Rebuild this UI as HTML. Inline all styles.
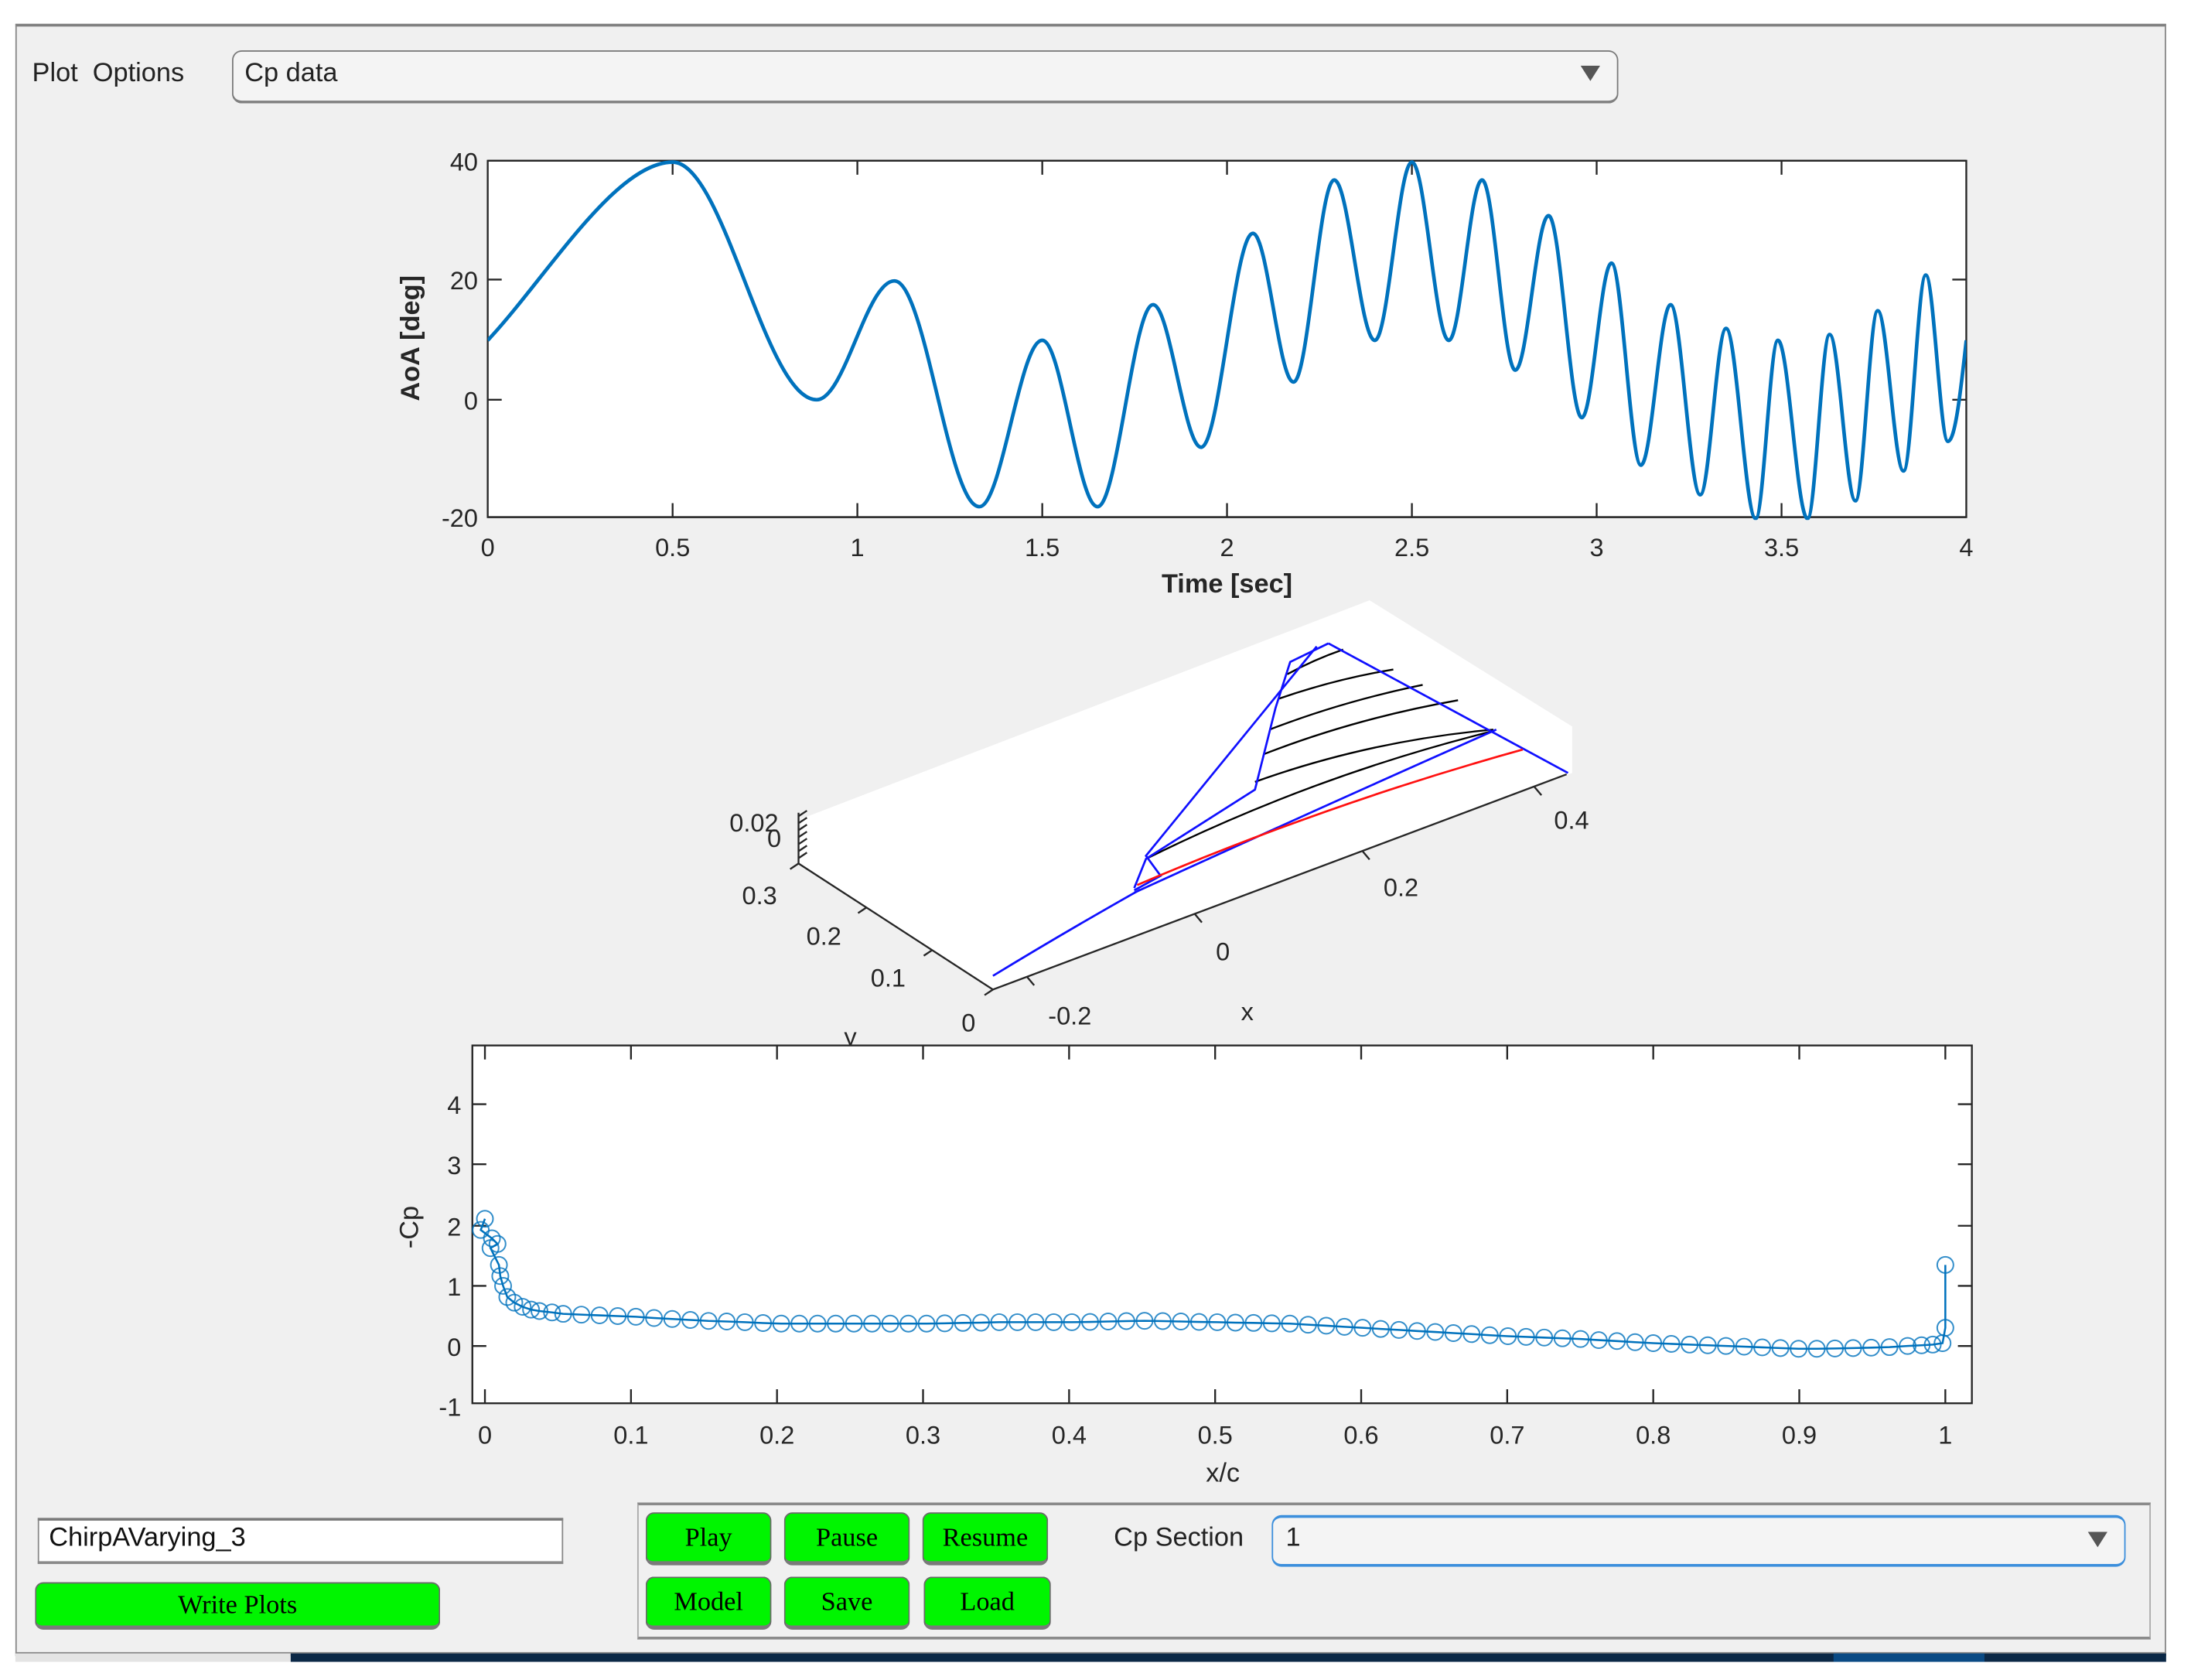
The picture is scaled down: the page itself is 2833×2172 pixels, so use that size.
<!DOCTYPE html>
<html><head><meta charset="utf-8"><style>
html,body{margin:0;padding:0;background:#fff;width:2833px;height:2171px;overflow:hidden}
#w{position:absolute;left:0;top:0;width:1568px;height:1202px;transform:scale(1.807);transform-origin:0 0;font-family:"Liberation Sans",sans-serif;color:#222}
.a{position:absolute}
.btn{position:absolute;background:#00f500;border-radius:6px;border:1px solid #6a6a6a;border-bottom:3px solid #7a7a7a;box-sizing:border-box;font-family:"Liberation Serif",serif;font-size:19px;text-align:center;color:#000}
</style></head><body><div id="w">
<div class="a" style="left:11px;top:17px;width:1537px;height:1163px;background:#f0f0f0;border:1px solid #888;border-top:2px solid #808080;border-bottom:3px solid #8a8a8a"></div>
<div class="a" style="left:11px;top:1183px;width:197px;height:6px;background:#e4e4e4"></div>
<div class="a" style="left:208px;top:1183px;width:1342px;height:6px;background:#0b2846"></div>
<div class="a" style="left:1312px;top:1183px;width:108px;height:6px;background:#0a4a84"></div>

<div class="a" style="left:23px;top:42px;font-size:19px">Plot&nbsp; Options</div>
<div class="a" style="left:166px;top:36px;width:990px;height:35px;background:#f4f4f4;border:1px solid #7a7a7a;border-bottom:2px solid #808080;border-radius:7px"></div>
<div class="a" style="left:175px;top:42px;font-size:19px">Cp data</div>
<svg class="a" style="left:1131px;top:47px" width="14" height="12"><path d="M0,0H14L7,11Z" fill="#555"/></svg>

<svg class="a" style="left:0;top:0" width="1560" height="1196" font-family="Liberation Sans, sans-serif" font-size="18" fill="#262626">
<defs>
<clipPath id="c1"><rect x="349" y="113" width="1058" height="259"/></clipPath>
<marker id="m" markerWidth="14" markerHeight="14" refX="7" refY="7" markerUnits="userSpaceOnUse"><circle cx="7" cy="7" r="5.8" fill="none" stroke="#0072BD" stroke-width="1.1" stroke-opacity="0.8"/></marker>
</defs>
<rect x="349" y="115" width="1058" height="255" fill="#fff" stroke="#262626" stroke-width="1.3"/>
<g stroke="#262626" stroke-width="1.3">
<path d="M349,115h1058M349,370h1058"/>
<path d="M481.3,115v10M613.5,115v10M745.8,115v10M878,115v10M1010.3,115v10M1142.5,115v10M1274.8,115v10M481.3,370v-10M613.5,370v-10M745.8,370v-10M878,370v-10M1010.3,370v-10M1142.5,370v-10M1274.8,370v-10M349,200h10M349,286h10M1407,200h-10M1407,286h-10"/>
</g>
<g text-anchor="end">
<text x="342" y="122">40</text><text x="342" y="207">20</text><text x="342" y="293">0</text><text x="342" y="377">-20</text></g>
<g text-anchor="middle">
<text x="349" y="398">0</text><text x="481.3" y="398">0.5</text><text x="613.5" y="398">1</text><text x="745.8" y="398">1.5</text><text x="878" y="398">2</text><text x="1010.3" y="398">2.5</text><text x="1142.5" y="398">3</text><text x="1274.8" y="398">3.5</text><text x="1407" y="398">4</text>
<text x="878" y="424" font-weight="bold" font-size="19">Time [sec]</text>
<text transform="translate(300,242) rotate(-90)" font-weight="bold" font-size="19">AoA [deg]</text>
</g>
<path clip-path="url(#c1)" fill="none" stroke="#0072BD" stroke-width="2.6" d="M349,243.5 C390,200 440,116 481.3,116 C518.3,116 547.4,286 584.4,286 C604.4,286 620,201 640,201 C662,201 678.8,362.5 700.8,362.5 C716.8,362.5 729.8,243.5 745.8,243.5 C759.8,243.5 771.4,362.5 785.4,362.5 C799.4,362.5 811.1,218 825.1,218 C837.1,218 847.5,320 859.5,320 C872.5,320 883.5,167 896.5,167 C907,167 915.1,273.3 925.6,273.3 C936.1,273.3 944.2,128.8 954.7,128.8 C965.2,128.8 973.3,243.5 983.8,243.5 C993.3,243.5 1000.8,116 1010.3,116 C1019.8,116 1027.2,243.5 1036.7,243.5 C1045.3,243.5 1051.9,128.8 1060.5,128.8 C1069.1,128.8 1075.7,264.8 1084.3,264.8 C1092.9,264.8 1099.5,154.3 1108.1,154.3 C1116.7,154.3 1123.3,298.8 1131.9,298.8 C1139.5,298.8 1145.5,188.3 1153.1,188.3 C1160.7,188.3 1166.6,332.8 1174.2,332.8 C1181.8,332.8 1187.8,218 1195.4,218 C1203,218 1209,354 1216.6,354 C1223.3,354 1228.4,235 1235.1,235 C1242.7,235 1248.7,371 1256.3,371 C1262,371 1266.5,243.5 1272.2,243.5 C1279.8,243.5 1285.8,371 1293.4,371 C1299.1,371 1303.5,239.3 1309.2,239.3 C1315.9,239.3 1321,358.3 1327.7,358.3 C1333.4,358.3 1337.9,222.3 1343.6,222.3 C1350.3,222.3 1355.4,337 1362.1,337 C1367.8,337 1372.3,196.8 1378,196.8 C1383.7,196.8 1388.2,315.8 1393.9,315.8 C1399,315.8 1403,280 1407,243.5"/>

<polygon points="573.5,585.8 980,429.5 1125,519.8 1125,553 710.5,708 571.4,617.8" fill="#fff"/>
<g stroke="#262626" stroke-width="1.3" fill="none">
<path d="M571.4,617.8L710.5,708L1121,554"/>
<path d="M571.4,617.8V581.5"/>
<path d="M571.4,584l6,-4M571.4,589l6,-4M571.4,594l6,-4M571.4,599l6,-4M571.4,604l6,-4M571.4,609l6,-4M571.4,614l6,-4"/>
<path d="M571.4,617.8l-6,4M620,649.3l-6,4M667,679.8l-6,4M710.5,708l-6,4"/>
<path d="M735,699l5,6M855,654l5,6M975,609l5,6M1098,563l5,6"/>
</g>
<g stroke="#000" stroke-width="1.3" fill="none">
<path d="M921.1,482.4Q940,472 961.1,464.7"/>
<path d="M914.8,500Q955,486 997,479"/>
<path d="M908.5,522Q960,502 1018,490"/>
<path d="M904.3,539.6Q970,514 1043.3,501"/>
<path d="M898,559.4Q980,530 1068.6,522"/>
<path d="M820,614.5Q940,555 1068.6,523"/>
</g>
<g stroke="#1010ff" stroke-width="1.5" fill="none">
<path d="M950.6,460.3L1122,553"/>
<path d="M950.6,460.3L923.2,473.6L912.7,506.6L898,565L820,614.5L811.6,635.4"/>
<path d="M942.2,462.5L820,612.3L830.5,626.6L811.6,637"/>
<path d="M811.6,638.7Q940,580 1070.7,522"/>
<path d="M710.5,698.2Q760,668 815.8,636.5"/>
</g>
<path d="M813.7,633.2Q950,575 1089.6,536.3" stroke="#ff1010" stroke-width="1.5" fill="none"/>
<text x="522" y="595">0.02</text><text x="549" y="606">0</text>
<text x="531" y="647">0.3</text><text x="577" y="676">0.2</text><text x="623" y="706">0.1</text><text x="688" y="738">0</text>
<text x="604" y="748">y</text>
<text x="750" y="733">-0.2</text><text x="870" y="687">0</text><text x="990" y="641">0.2</text><text x="1112" y="593">0.4</text>
<text x="888" y="730">x</text>

<rect x="338" y="748" width="1073" height="256" fill="#fff" stroke="#262626" stroke-width="1.3"/>
<g stroke="#262626" stroke-width="1.3">
<path d="M338,790h10M338,833h10M338,877h10M338,920h10M338,963h10M1411,790h-10M1411,833h-10M1411,877h-10M1411,920h-10M1411,963h-10"/>
<path d="M451.5,1004v-10M556,1004v-10M660.5,1004v-10M765,1004v-10M869.5,1004v-10M974,1004v-10M1078.5,1004v-10M1183,1004v-10M1287.5,1004v-10M451.5,748v10M556,748v10M660.5,748v10M765,748v10M869.5,748v10M974,748v10M1078.5,748v10M1183,748v10M1287.5,748v10M347,748v10M1392,748v10M347,1004v-10M1392,1004v-10"/>
</g>
<g text-anchor="end">
<text x="330" y="797">4</text><text x="330" y="840">3</text><text x="330" y="884">2</text><text x="330" y="927">1</text><text x="330" y="970">0</text><text x="330" y="1013">-1</text></g>
<g text-anchor="middle">
<text x="347" y="1033">0</text><text x="451.5" y="1033">0.1</text><text x="556" y="1033">0.2</text><text x="660.5" y="1033">0.3</text><text x="765" y="1033">0.4</text><text x="869.5" y="1033">0.5</text><text x="974" y="1033">0.6</text><text x="1078.5" y="1033">0.7</text><text x="1183" y="1033">0.8</text><text x="1287.5" y="1033">0.9</text><text x="1392" y="1033">1</text>
<text x="875" y="1060" font-size="19">x/c</text>
<text transform="translate(299,878) rotate(-90)" font-size="19">-Cp</text>
</g>
<polyline fill="none" stroke="#0072BD" stroke-width="1.4" marker-start="url(#m)" marker-mid="url(#m)" marker-end="url(#m)" points="347,872 344,880 352,886 356,890 351,893 357,905 358,913 360,920 363,928 368,932 374,935 380,937 386,938 395,939 403,940 416,940.6 429,941.1 442,941.6 455,942.1 468,943 481,943.7 494,944.4 507,945.1 520,945.5 533,946 546,946.6 559,947 572,947 585,947 598,947 611,947 624,947 637,947 650,947 663,947 676,946.8 689,946.5 702,946.3 715,946 728,946 741,946 754,946 767,946 780,945.8 793,945.5 806,945.2 819,945 832,945.2 845,945.5 858,945.8 871,946 884,946.3 897,946.5 910,946.8 923,947 936,947.8 949,948.5 962,949.3 975,950 988,950.8 1001,951.5 1014,952.3 1027,953 1040,953.8 1053,954.5 1066,955.3 1079,956 1092,956.5 1105,957 1118,957.5 1131,958 1144,958.8 1157,959.5 1170,960.3 1183,961 1196,961.5 1209,962 1222,962.5 1235,963 1248,963.5 1261,964 1274,964.5 1287,965 1300,965 1313,964.8 1326,964.5 1339,964.2 1352,963.8 1365,963 1375,962.5 1383,962 1390,961 1392,950 1392,905"/>
</svg>

<div class="a" style="left:27px;top:1086px;width:374px;height:29px;background:#fff;border:1px solid #888;border-top:2px solid #7a7a7a;border-bottom:2px solid #8a8a8a"></div>
<div class="a" style="left:35px;top:1090px;font-size:19px;color:#111">ChirpAVarying_3</div>
<div class="btn" style="left:25px;top:1132px;width:290px;height:34px;line-height:32px">Write Plots</div>

<div class="a" style="left:456px;top:1075px;width:1081px;height:94px;border:1px solid #aaa;border-top:2px solid #8a8a8a;border-bottom:2px solid #8a8a8a"></div>
<div class="btn" style="left:462px;top:1082px;width:90px;height:38px;line-height:36px">Play</div>
<div class="btn" style="left:561px;top:1082px;width:90px;height:38px;line-height:36px">Pause</div>
<div class="btn" style="left:660px;top:1082px;width:90px;height:38px;line-height:36px">Resume</div>
<div class="btn" style="left:462px;top:1128px;width:90px;height:38px;line-height:36px">Model</div>
<div class="btn" style="left:561px;top:1128px;width:90px;height:38px;line-height:36px">Save</div>
<div class="btn" style="left:661px;top:1128px;width:91px;height:38px;line-height:36px">Load</div>
<div class="a" style="left:797px;top:1090px;font-size:19px">Cp Section</div>
<div class="a" style="left:910px;top:1084px;width:609px;height:33px;background:#f4f4f4;border:1px solid #3c8fdc;border-top:2px solid #3c8fdc;border-bottom:2px solid #3c8fdc;border-radius:7px"></div>
<div class="a" style="left:920px;top:1090px;font-size:19px">1</div>
<svg class="a" style="left:1494px;top:1096px" width="14" height="12"><path d="M0,0H14L7,11Z" fill="#555"/></svg>
</div></body></html>
